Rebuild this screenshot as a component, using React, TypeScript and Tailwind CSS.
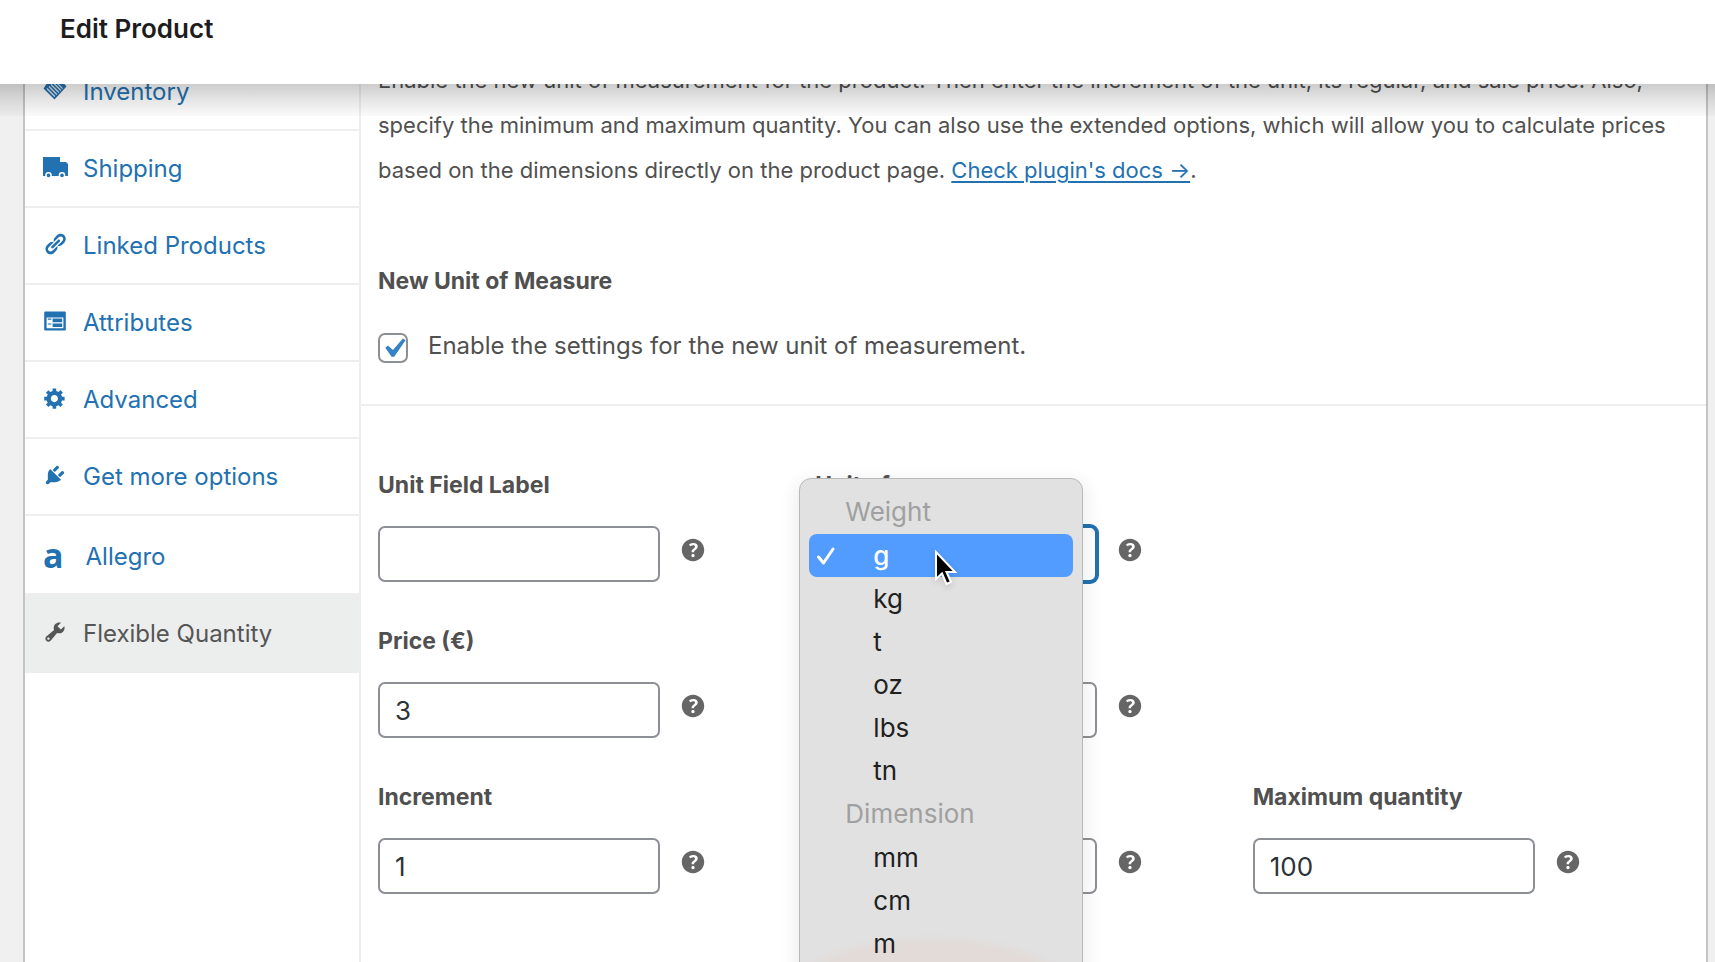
import { ReactNode } from "react";

type Tab = { label: string; icon: ReactNode; active?: boolean };

// 20x20 admin glyphs
const Glyph = ({ d, className }: { d: string; className: string }) => (
  <svg viewBox="0 0 20 20" fill="currentColor" className={className} aria-hidden="true">
    <path fillRule="evenodd" d={d} />
  </svg>
);

const LINK =
  "M17.74 2.76c1.68 1.69 1.68 4.41 0 6.1l-1.53 1.52c-1.12 1.12-2.7 1.47-4.14 1.09l2.62-2.61.76-.77.76-.76c.84-.84.84-2.2 0-3.04-.84-.85-2.2-.85-3.04 0l-.77.76-3.38 3.38c-.37-1.44-.02-3.02 1.1-4.14l1.52-1.53c1.69-1.68 4.42-1.68 6.1 0zM8.59 13.43l5.34-5.34c.42-.42.42-1.1 0-1.52-.44-.43-1.13-.39-1.53 0l-5.33 5.34c-.42.42-.42 1.1 0 1.52.44.43 1.13.39 1.52 0zm-.76 2.29l4.14-4.15c.38 1.44.03 3.02-1.09 4.14l-1.52 1.53c-1.69 1.68-4.41 1.68-6.1 0-1.68-1.68-1.68-4.42 0-6.1l1.53-1.52c1.12-1.12 2.7-1.47 4.14-1.1l-4.14 4.15c-.85.84-.85 2.2 0 3.05.84.84 2.2.84 3.04 0z";
const FORM =
  "M2 2h16c.55 0 1 .45 1 1v14c0 .55-.45 1-1 1H2c-.55 0-1-.45-1-1V3c0-.55.45-1 1-1zm15 14V7H3v9h14zM4 8v1h3V8H4zm4 0v3h8V8H8zm-4 4v1h3v-1H4zm4 0v3h8v-3H8z";
const GEAR =
  "M18 12h-2.18c-.17.7-.44 1.35-.81 1.93l1.54 1.54-2.1 2.1-1.54-1.54c-.58.36-1.23.63-1.91.79V19H8v-2.18c-.68-.16-1.33-.43-1.91-.79l-1.54 1.54-2.12-2.12 1.54-1.54c-.36-.58-.63-1.23-.79-1.91H1V9.03h2.17c.16-.7.44-1.35.8-1.94L2.43 5.55l2.1-2.1 1.54 1.54c.58-.37 1.24-.64 1.93-.81V2h3v2.18c.68.16 1.33.43 1.91.79l1.54-1.54 2.12 2.12-1.54 1.54c.36.59.64 1.24.8 1.94H18V12zm-8.5 1.5c1.66 0 3-1.34 3-3s-1.34-3-3-3-3 1.34-3 3 1.34 3 3 3z";
const PLUG =
  "M13.11 4.36L9.87 7.6 8 5.73l3.24-3.24c.35-.34 1.05-.2 1.56.32.52.51.66 1.21.31 1.55zm-8 1.77l.91-1.12 9.01 9.01-1.19.84c-.71.71-2.63 1.16-3.82 1.16H6.14L4.9 17.26c-.59.59-1.54.59-2.12 0-.59-.58-.59-1.53 0-2.12l1.24-1.24v-3.88c0-1.13.4-3.19 1.09-3.89zm7.26 3.97l3.24-3.24c.34-.35 1.04-.21 1.55.31.52.51.66 1.21.31 1.55l-3.24 3.25z";
const WRENCH =
  "M16.68 9.77c-1.34 1.34-3.3 1.67-4.95.99l-5.41 6.52c-.99.99-2.59.99-3.58 0s-.99-2.59 0-3.57l6.52-5.42c-.68-1.65-.35-3.61.99-4.95 1.28-1.28 3.12-1.62 4.72-1.06l-2.89 2.89 2.82 2.82 2.86-2.87c.53 1.58.18 3.39-1.08 4.65zM3.81 16.21c.4.39 1.04.39 1.43 0 .4-.4.4-1.04 0-1.43-.39-.4-1.03-.4-1.43 0-.39.39-.39 1.03 0 1.43z";
const HELP =
  "M17 10c0-3.87-3.14-7-7-7-3.87 0-7 3.13-7 7s3.13 7 7 7c3.86 0 7-3.13 7-7zm-6.3 1.48H9.14v-.43c0-.38.08-.7.24-.98s.46-.57.88-.89c.41-.29.68-.53.81-.71.14-.18.2-.39.2-.62 0-.25-.09-.44-.28-.58-.19-.13-.45-.19-.79-.19-.58 0-1.25.19-2 .57l-.64-1.28c.87-.49 1.8-.74 2.77-.74.81 0 1.45.2 1.92.58.48.39.71.91.71 1.55 0 .43-.09.8-.29 1.11-.19.32-.57.67-1.11 1.06-.38.28-.61.49-.71.63-.1.15-.15.34-.15.57v.35zm-1.47 2.74c-.18-.17-.27-.42-.27-.73 0-.33.08-.58.26-.75s.43-.25.77-.25c.32 0 .57.09.75.26s.27.42.27.74c0 .3-.09.55-.27.72-.18.18-.43.27-.75.27-.33 0-.58-.09-.76-.26z";
const CHECK = "M14.83 4.89l1.34.94-5.81 8.38H9.02L5.78 9.67l1.34-1.25 2.57 2.4z";

const TagIcon = () => (
  <svg viewBox="0 0 24 24" className="size-6" aria-hidden="true">
    <path fill="currentColor" d="M6 2h12l5.500 6.500L11.500 21.500.500 10.500z" />
    <path
      stroke="#e4e6ea"
      strokeWidth="1.200"
      d="M4 10.500l7.800 8M6 8.500l7.800 8M8 6.500l7.800 8M10 4.500l7.800 8M12.500 3.500l7 7.200"
    />
  </svg>
);

const TruckIcon = () => (
  <svg viewBox="0 0 25 21" className="h-[21px] w-[25px]" aria-hidden="true">
    <path fill="currentColor" d="M0 0h17v5h6l2 2v12H0z" />
    <g fill="currentColor" stroke="#fff" strokeWidth="1.500">
      <circle cx="5.500" cy="18.300" r="2.600" />
      <circle cx="19" cy="18.300" r="2.600" />
    </g>
  </svg>
);

const TABS: Tab[] = [
  { label: "Inventory", icon: <TagIcon /> },
  { label: "Shipping", icon: <TruckIcon /> },
  { label: "Linked Products", icon: <Glyph d={LINK} className="size-6" /> },
  { label: "Attributes", icon: <Glyph d={FORM} className="size-6" /> },
  { label: "Advanced", icon: <Glyph d={GEAR} className="size-6" /> },
  { label: "Get more options", icon: <Glyph d={PLUG} className="size-6" /> },
  {
    label: "Allegro",
    icon: <span className="mr-[22px] font-['Open_Sans',sans-serif] text-[34px] leading-6 font-bold">a</span>,
  },
  { label: "Flexible Quantity", icon: <Glyph d={WRENCH} className="size-6" />, active: true },
];

const UNITS = [
  { group: "Weight", items: ["g", "kg", "t", "oz", "lbs", "tn"] },
  { group: "Dimension", items: ["mm", "cm", "m"] },
];

const Field = ({ id, label, children }: { id: string; label: string; children: ReactNode }) => (
  <div>
    <label htmlFor={id} className="block text-[23px] leading-[30px] font-bold">
      {label}
    </label>
    <div className="mt-[26px] flex items-center">
      {children}
      <button type="button" aria-label={`Help: ${label}`} className="mb-2 ml-[17px] text-[#666]">
        <Glyph d={HELP} className="size-8" />
      </button>
    </div>
  </div>
);

const TextField = ({ id, label, value = "" }: { id: string; label: string; value?: string }) => (
  <Field id={id} label={label}>
    <input
      id={id}
      type="text"
      defaultValue={value}
      className="h-14 w-[282px] rounded-[7px] border-2 border-[#8c8f94] bg-white px-[15px] text-[26px] text-[#2c3338]"
    />
  </Field>
);

const Cursor = () => (
  <svg viewBox="0 0 24 38" className="absolute top-[71px] left-[134px] h-[38px] w-6 drop-shadow-md" aria-hidden="true">
    <path
      d="M2 2v27l6-5.500 4.500 10.500 4.500-2-4.500-10H21z"
      fill="#000"
      stroke="#fff"
      strokeWidth="2"
    />
  </svg>
);

const UnitMenu = () => (
  <div
    role="listbox"
    aria-label="Unit of measure"
    className="absolute top-2 -left-4 z-10 h-[560px] w-[284px] overflow-hidden rounded-xl border border-[#b9b9b9] bg-[#e1e1e1] bg-[radial-gradient(ellipse_150px_60px_at_132px_515px,#e2dbd8_85%,#e1e1e1)] px-[9px] pt-[11px] text-[26px] text-[#1f1f1f] shadow-[0_6px_16px_6px_rgba(0,0,0,0.06)]"
  >
    {UNITS.map(({ group, items }) => (
      <div key={group} role="group" aria-label={group}>
        <div className="h-11 pl-9 leading-[43px] text-[#a0a0a0]">{group}</div>
        {items.map((unit) => (
          <button
            key={unit}
            type="button"
            role="option"
            aria-selected={unit === "g"}
            className={
              unit === "g"
                ? "flex h-[43px] w-full items-center rounded-lg bg-[#529cff] pl-2 font-medium text-white"
                : "flex h-[43px] w-full items-center pl-2"
            }
          >
            <span className="w-14">
              {unit === "g" && (
                <svg viewBox="0 0 18 18" className="size-[18px]" fill="none" aria-hidden="true">
                  <path d="M1.500 10l5 6L16 2" stroke="#fff" strokeWidth="3" strokeLinecap="round" strokeLinejoin="round" />
                </svg>
              )}
            </span>
            {unit}
          </button>
        ))}
      </div>
    ))}
    <Cursor />
  </div>
);

export default function App(): JSX.Element {
  return (
    <div className="flex h-screen flex-col overflow-hidden bg-[#f0f0f1] font-[Inter,'Liberation_Sans',sans-serif] text-[#505050]">
      <header className="relative z-20 h-[84px] shrink-0 bg-white px-[60px] pt-[13px]">
        <h1 className="text-[26px] leading-8 font-semibold text-[#1d1d1f]">Edit Product</h1>
        {/* soft edge over the scrolled content */}
        <div className="pointer-events-none absolute inset-x-0 top-full h-8 bg-linear-to-b from-black/20 via-black/10 to-black/2" />
      </header>

      <main className="mr-[7px] -mt-[30px] ml-[23px] flex grow border-x-2 border-[#c3c4c7] bg-white">
        {/* Tabs */}
        <nav className="w-[336px] shrink-0 border-r-2 border-[#eee]">
          {TABS.map(({ label, icon, active }) => (
            <a
              key={label}
              href="#"
              className={
                active
                  ? "flex h-[78px] items-center bg-[#eceded] pl-[18px] text-[24px] text-[#555]"
                  : "flex h-[77px] items-center border-b-2 border-[#eee] pt-px pl-[18px] text-[24px] text-[#2271b1] nth-7:h-[79px] nth-7:pt-1"
              }
            >
              <span className="mb-1 flex min-w-10 items-center">{icon}</span>
              {label}
            </a>
          ))}
        </nav>

        {/* Panel */}
        <section className="min-w-0 grow">
          <div className="border-b-2 border-[#eee] pt-1 pr-4 pb-10 pl-[17px]">
            <p className="text-[22px] leading-[45px]">
              Enable the new unit of measurement for the product. Then enter the increment of the unit, its regular, and
              sale price. Also, specify the minimum and maximum quantity. You can also use the extended options, which
              will allow you to calculate prices based on the dimensions directly on the product page.{" "}
              <a href="#" className="text-[#2271b1] underline decoration-2 underline-offset-3">
                Check plugin's docs →
              </a>
              .
            </p>
            <h2 className="mt-[73px] text-[23px] leading-[30px] font-bold">New Unit of Measure</h2>
            <label className="mt-8 flex h-9 items-center text-[24px]">
              <span className="relative mt-1 mr-5 flex size-[30px] items-center justify-center">
                <input
                  type="checkbox"
                  defaultChecked
                  className="size-[30px] appearance-none rounded-[7px] border-2 border-[#8c8f94] bg-white"
                />
                <svg
                  viewBox="0 0 20 20"
                  className="pointer-events-none absolute size-[39px] text-[#3582c4]"
                  aria-hidden="true"
                >
                  <path fill="currentColor" d={CHECK} />
                </svg>
              </span>
              Enable the settings for the new unit of measurement.
            </label>
          </div>

          <div className="grid grid-cols-3 gap-y-11 pt-16 pr-4 pl-[17px]">
            <TextField id="unit-label" label="Unit Field Label" />
            <div className="relative">
              <Field id="unit" label="Unit of measure">
                <select
                  id="unit"
                  className="h-14 w-[282px] appearance-none rounded-[7px] border-2 border-[#2271b1] bg-white px-[15px] text-[26px] ring-2 ring-[#2271b1]"
                >
                  <option>g</option>
                </select>
              </Field>
              <UnitMenu />
            </div>
            <div />
            <TextField id="price" label="Price (€)" value="3" />
            <TextField id="sale-price" label="Sale price (€)" />
            <div />
            <TextField id="increment" label="Increment" value="1" />
            <TextField id="min" label="Minimum quantity" />
            <TextField id="max" label="Maximum quantity" value="100" />
          </div>
        </section>
      </main>
    </div>
  );
}
